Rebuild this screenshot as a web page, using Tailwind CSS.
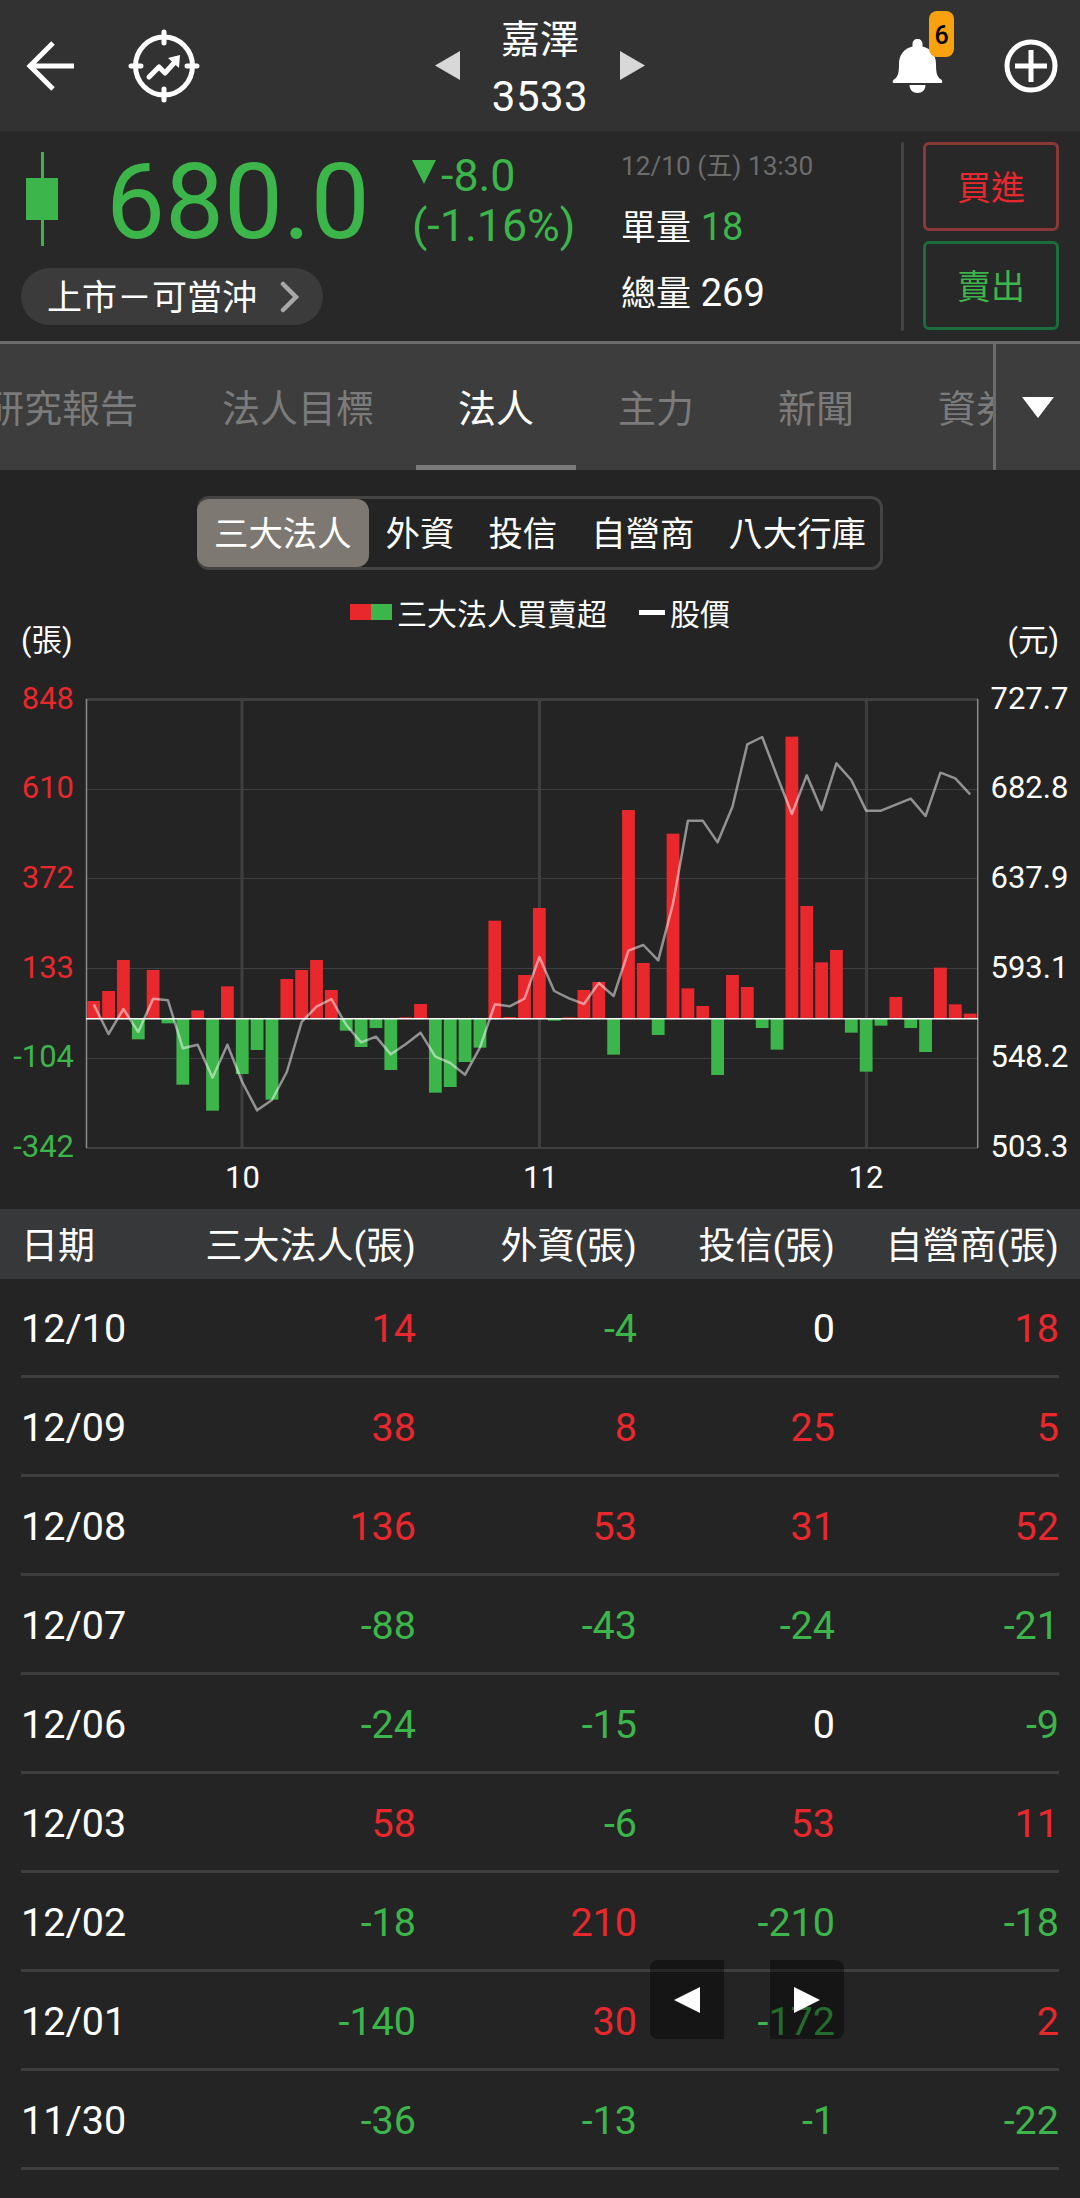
<!DOCTYPE html>
<html lang="zh-Hant">
<head>
  <meta charset="UTF-8">
  <title>嘉澤 3533 - 法人</title>
  <script src="https://cdn.jsdelivr.net/npm/@tailwindcss/browser@4"></script>
</head>
<body class="w-[1080px] h-[2198px] overflow-hidden bg-[#242424] text-white font-['Roboto','Noto_Sans_CJK_TC',sans-serif]">

  <!-- Header -->
  <header class="h-[131px] bg-[#323232] flex items-center justify-between pl-[26px] pr-[22px]">
    <div class="flex items-center w-[409px]">
      <svg class="w-[49px] h-[50px]" viewBox="0 0 49 50" fill="none" stroke="#fff" stroke-width="5">
        <path d="M27 2 L4 25 L27 48 M4 25 H48"/>
      </svg>
      <svg class="w-[74px] h-[74px] ml-[52px]" viewBox="0 0 74 74" fill="none" stroke="#fff" stroke-width="5">
        <ellipse cx="37" cy="37" rx="28.5" ry="29"/>
        <path stroke-linecap="round" d="M37 3 V14 M37 60 V71 M4 37 H14 M60 37 H70"/>
        <path stroke-linecap="round" stroke-linejoin="round" d="M22 48 L32 38 L38 44 L47 34"/>
        <path fill="#fff" stroke="none" d="M41 29 L53 26 L52 39 Z"/>
      </svg>
    </div>
    <div class="flex items-center justify-between w-[210px] -ml-[4px]">
      <svg class="w-[25px] h-[29px]" viewBox="0 0 25 29"><path fill="#d8d8d8" d="M0 14.5 L25 0 V29 Z"/></svg>
      <div class="text-center pt-[7px]">
        <div class="text-[39px] leading-[56px]">嘉澤</div>
        <div class="text-[42px] leading-[58px] tracking-[0.5px]">3533</div>
      </div>
      <svg class="w-[25px] h-[29px]" viewBox="0 0 25 29"><path fill="#d8d8d8" d="M25 14.5 L0 0 V29 Z"/></svg>
    </div>
    <div class="flex items-center justify-end w-[409px]">
      <div class="relative mr-[61px]">
        <svg class="w-[51px] h-[54px]" viewBox="0 0 51 54" fill="#fff">
          <path d="M25.5 0 C28.500 0 30.500 2 30.500 5 L30.500 7.500 C39 9.500 44 16 44 25 C44 34 45 38 49 40.500 C51 42 50.500 44 49 44 H2 C0.500 44 0 42 2 40.500 C6 38 7 34 7 25 C7 16 12 9.500 20.500 7.500 L20.500 5 C20.500 2 22.500 0 25.500 0 Z"/>
          <path d="M17.500 46 H33.500 C33.500 51 30 54 25.500 54 C21 54 17.500 51 17.500 46 Z"/>
        </svg>
        <span class="absolute left-[37px] -top-[28px] w-[25px] h-[46px] rounded-lg bg-[#f9a10f] text-black text-[25px] font-medium leading-[50px] text-center">6</span>
      </div>
      <svg class="w-[54px] h-[54px]" viewBox="0 0 54 54" fill="none" stroke="#fff" stroke-width="5">
        <circle cx="27" cy="27" r="24"/>
        <path d="M27 11 V43 M11 27 H43"/>
      </svg>
    </div>
  </header>

  <!-- Quote -->
  <section class="h-[210px] bg-[#282828] flex">
    <div class="w-[412px] pl-[21px]">
      <div class="flex h-[137px] pt-[21px]">
        <svg class="w-[32px] h-[94px] ml-[5px]" viewBox="0 0 32 94" fill="#3cb54a">
          <rect x="15" width="3" height="94"/><rect y="26" width="32" height="42"/>
        </svg>
        <div class="ml-[48px] text-[105px] leading-[101px] text-[#3cb54a]">680.0</div>
      </div>
      <div class="flex items-center w-[302px] h-[57px] rounded-full bg-[#3b3b3b] pl-[26px]">
        <span class="text-[35px] leading-[57px] pt-[3px]">上市－可當沖</span>
        <svg class="w-[20px] h-[32px] ml-[23px]" viewBox="0 0 20 32" fill="none" stroke="#a8a8a8" stroke-width="4.500" stroke-linecap="round"><path d="M3 3 L16 16 L3 29"/></svg>
      </div>
    </div>

    <div class="w-[209px] pt-[20px] text-[44.8px] leading-[50px] text-[#3cb54a] whitespace-nowrap">
      <div class="flex">
        <svg class="w-[24px] h-[24px] mt-[9px] mr-[5px]" viewBox="0 0 24 24"><path fill="#3cb54a" d="M0 0 H24 L12 24 Z"/></svg>
        <span>-8.0</span>
      </div>
      <div>(-1.16%)</div>
    </div>

    <div class="w-[280px] pt-[20px] whitespace-nowrap">
      <div class="text-[26.2px] leading-[31px] text-[#6c6c6c]">12/10 (五) 13:30</div>
      <div class="mt-[20px] h-[50px] text-[35px] leading-[50px]">單量 <span class="text-[38px] text-[#3cb54a] ml-[1px]">18</span></div>
      <div class="mt-[16px] h-[50px] text-[35px] leading-[50px]">總量 <span class="text-[38px] ml-[1px]">269</span></div>
    </div>

    <div class="w-[3px] h-[189px] mt-[11px] rounded bg-[#444]"></div>

    <div class="ml-[19px] mt-[11px] flex flex-col gap-[10px] text-[34px]">
      <button class="w-[136px] h-[89px] rounded-md border-3 border-[#8b3837] pt-[4px] text-[#e8282d]">買進</button>
      <button class="w-[136px] h-[89px] rounded-md border-3 border-[#1b6d3c] pt-[4px] text-[#3cb54a]">賣出</button>
    </div>
  </section>

  <!-- Tabs -->
  <nav class="flex h-[129px] border-t-3 border-[#6b6b6b] bg-[#3d3d3d] text-[38px] text-[#7b7b7b]">
    <div class="flex w-[993px] overflow-hidden whitespace-nowrap leading-[130px] *:shrink-0 *:px-[42px]">
      <div class="-ml-[56px]">研究報告</div>
      <div>法人目標</div>
      <div class="h-[126px] border-b-5 border-[#7b7b7b] text-white">法人</div>
      <div>主力</div>
      <div>新聞</div>
      <div>資券</div>
    </div>
    <div class="flex-1 border-l-3 border-[#6b6b6b] flex justify-center pt-[53px]">
      <svg class="w-[32px] h-[21px]" viewBox="0 0 32 21"><path fill="#fff" d="M0 0 H32 L16 21 Z"/></svg>
    </div>
  </nav>

  <!-- Investor type -->
  <div class="mt-[26px] flex justify-center">
    <div class="relative flex h-[74px] text-[34.4px] leading-[77px] *:px-[17px]">
      <div class="absolute inset-0 rounded-xl border-3 border-[#454443]"></div>
      <div class="my-[3px] leading-[71px] rounded-xl bg-[#7d7871] relative">三大法人</div>
      <div>外資</div>
      <div>投信</div>
      <div>自營商</div>
      <div>八大行庫</div>
    </div>
  </div>

  <!-- Legend -->
  <div class="mt-[21px] h-[48px] flex items-center justify-center text-[30px] leading-[48px]">
    <span class="w-[21px] h-[16px] bg-[#e8282d] -mt-[6px]"></span>
    <span class="w-[21px] h-[16px] bg-[#3cb54a] -mt-[6px] mr-[5px]"></span>
    <span>三大法人買賣超</span>
    <span class="w-[26px] h-[5px] bg-white ml-[32px] mr-[5px] -mt-[5px]"></span>
    <span>股價</span>
  </div>
  <div class="-mt-[20px] h-[61px] flex justify-between px-[21px] text-[30.5px] leading-[44px]">
    <span>(張)</span>
    <span>(元)</span>
  </div>

  <!-- Chart -->
  <svg class="block w-[1080px] h-[529px]" viewBox="0 680 1080 529" font-size="31">
    <g stroke="#3f3f3f">
      <path stroke-width="3" d="M86 699.500 H978 M242 699 V1148 M539.500 699 V1148 M866.500 699 V1148"/>
      <path stroke-width="2" d="M86 1148 H978"/>
      <path stroke-width="1" d="M86 789.500 H978 M86 878.500 H978 M86 968.500 H978 M86 1058.500 H978"/>
    </g>
    <path stroke="#8c8c8c" stroke-width="1.500" d="M86.500 699 V1148 M977.700 699 V1148"/>
    <g id="bars"></g>
    <path stroke="#fff" stroke-width="1.500" d="M86 1018.700 H978"/>
    <polyline id="price" fill="none" stroke="#fff" stroke-opacity="0.5" stroke-width="2.500" stroke-linejoin="round"/>
    <g text-anchor="end" fill="#e8282d">
      <text x="74" y="709">848</text>
      <text x="74" y="798">610</text>
      <text x="74" y="888">372</text>
      <text x="74" y="977.500">133</text>
    </g>
    <g text-anchor="end" fill="#3cb54a">
      <text x="74" y="1067">-104</text>
      <text x="74" y="1157">-342</text>
    </g>
    <g fill="#fff">
      <text x="990.500" y="709">727.7</text>
      <text x="990.500" y="798">682.8</text>
      <text x="990.500" y="888">637.9</text>
      <text x="990.500" y="977.500">593.1</text>
      <text x="990.500" y="1067">548.2</text>
      <text x="990.500" y="1157">503.3</text>
    </g>
    <g fill="#fff" text-anchor="middle">
      <text x="242.500" y="1188">10</text>
      <text x="540.500" y="1188">11</text>
      <text x="866" y="1188">12</text>
    </g>
  </svg>

  <!-- Table -->
  <div class="grid grid-cols-[180px_215px_221px_198px_224px] h-[70px] px-[21px] bg-[#37383a] text-[37px] leading-[75px] text-right whitespace-nowrap">
    <div class="text-left">日期</div>
    <div>三大法人(張)</div>
    <div>外資(張)</div>
    <div>投信(張)</div>
    <div>自營商(張)</div>
  </div>
  <div id="rows" class="px-[21px]"></div>

  <!-- Floating pager -->
  <div class="absolute left-[650px] top-[1960px] flex gap-[46px]">
    <button class="w-[74px] h-[79px] rounded-l-lg bg-black/40 flex items-center justify-center">
      <svg class="w-[26px] h-[26px]" viewBox="0 0 26 26"><path fill="#fff" d="M0 13 L26 0 V26 Z"/></svg>
    </button>
    <button class="w-[74px] h-[79px] rounded-r-lg bg-black/40 flex items-center justify-center">
      <svg class="w-[26px] h-[26px]" viewBox="0 0 26 26"><path fill="#fff" d="M26 13 L0 0 V26 Z"/></svg>
    </button>
  </div>

  <script>
    // Bar ends and price points, in thirds of a pixel below the chart's top
    const bars = [963, 933, 840, 1078, 870, 1030, 1214, 991, 1292, 919, 1182, 1110, 1259, 897, 870,
      840, 930, 1052, 1101, 1044, 1170, 1012, 972, 1238, 1221, 1146, 1103, 722, 1011, 885,
      684, 1022, 1012, 930, 906, 1124, 390, 849, 1065, 461, 925, 978, 1185, 885, 921,
      1044, 1109, 170, 678, 847, 810, 1058, 1175, 1037, 951, 1044, 1116, 863, 973, 1001];
    const price = [973, 1062, 987, 1056, 956, 961, 1105, 1094, 1193, 1094, 1206, 1291, 1260, 1176, 1026,
      980, 957, 1035, 1087, 1070, 1123, 1093, 1058, 1130, 1149, 1184, 1103, 973, 979, 956,
      831, 933, 955, 972, 909, 948, 812, 795, 841, 670, 422, 422, 487, 380, 193,
      171, 288, 402, 286, 390, 250, 300, 392, 392, 374, 356, 408, 278, 295, 343];
    const step = 14.855;
    const zero = 1016;

    document.getElementById('bars').innerHTML = bars.map((y, i) => {
      const top = 680 + Math.min(y, zero) / 3;
      const color = y < zero ? '#e8282d' : '#3cb54a';
      return `<rect x="${87.3 + i * step}" y="${top}" width="12.8" height="${Math.abs(y - zero) / 3}" fill="${color}"/>`;
    }).join('');
    document.getElementById('price').setAttribute('points',
      price.map((y, i) => `${93.7 + i * step},${680 + y / 3}`).join(' '));

    const data = [
      ['12/10', 14, -4, 0, 18],
      ['12/09', 38, 8, 25, 5],
      ['12/08', 136, 53, 31, 52],
      ['12/07', -88, -43, -24, -21],
      ['12/06', -24, -15, 0, -9],
      ['12/03', 58, -6, 53, 11],
      ['12/02', -18, 210, -210, -18],
      ['12/01', -140, 30, -172, 2],
      ['11/30', -36, -13, -1, -22]
    ];
    const cell = v => {
      const color = v > 0 ? 'text-[#e8282d]' : v < 0 ? 'text-[#3cb54a]' : 'text-white';
      return `<div class="${color}">${v}</div>`;
    };
    document.getElementById('rows').innerHTML = data.map(([date, ...values]) => `
      <div class="grid grid-cols-[180px_215px_221px_198px_224px] h-[99px] border-b-3 border-[#3e3e3e] text-[39.5px] leading-[99px] text-right">
        <div class="text-left">${date}</div>${values.map(cell).join('')}
      </div>`).join('');
  </script>

</body>
</html>
